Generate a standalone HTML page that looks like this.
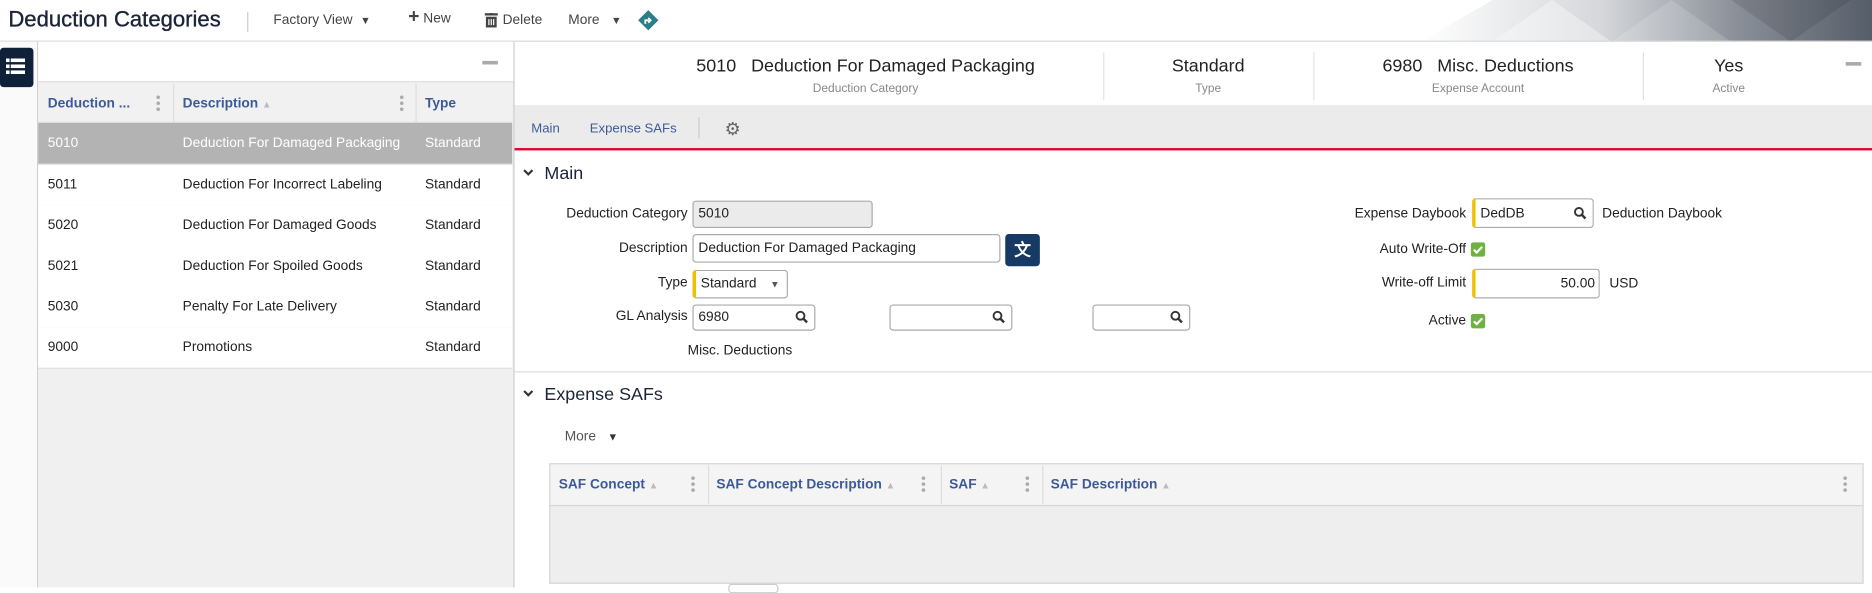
<!DOCTYPE html>
<html><head><meta charset="utf-8"><style>
html,body{margin:0;padding:0;width:1872px;height:587px;overflow:hidden;background:#fff}
#w{position:absolute;left:0;top:0;width:1568px;height:492px;transform:scale(1.19388);transform-origin:0 0;font-family:"Liberation Sans",sans-serif;font-size:11.5px;color:#222}
.a{position:absolute}
.hd{color:#3c5a9a;font-weight:bold;font-size:11.5px}
.inp{position:absolute;border:1px solid #aaa;border-radius:3px;background:#fff;height:22px;box-sizing:border-box;font-size:11.5px;line-height:21px;padding-left:4px}
.req{border-left:3px solid #f0c000}
.lbl{position:absolute;text-align:right;font-size:11.5px}
.mag{position:absolute;right:5px;top:4px}
.chk{position:absolute;width:12px;height:12px;background:#6fb240;border-radius:2px}
.dots{position:absolute;width:3px}
.dots i{display:block;width:3px;height:3px;border-radius:50%;background:#aaa;margin-bottom:2px}
.row{position:absolute;left:32px;width:397px;height:34px;border-bottom:1px solid #ddd;line-height:34px;font-size:11.5px}
.row span{position:absolute}
</style></head><body><div id="w">
<svg class="a" style="left:1190px;top:0" width="378" height="35">
<defs><linearGradient id="g" x1="0" x2="1"><stop offset="0" stop-color="#fff"/><stop offset="0.4" stop-color="#d5d7da"/><stop offset="0.7" stop-color="#8a9099"/><stop offset="1" stop-color="#555d68"/></linearGradient></defs>
<polygon points="0,35 60,0 378,0 378,35" fill="url(#g)"/>
<polygon points="60,35 110,0 160,35" fill="#fff" opacity=".35"/>
<polygon points="160,35 210,0 260,35" fill="#fff" opacity=".15"/>
<polygon points="260,0 310,35 360,0" fill="#000" opacity=".1"/>
</svg>
<div class="a" style="left:0;top:34px;width:1568px;height:1px;background:#d8d8d8"></div>
<div class="a" style="left:7px;top:5px;font-size:18.5px;color:#1b2438;-webkit-text-stroke:0.3px #1b2438">Deduction Categories</div>
<div class="a" style="left:207px;top:10px;width:1px;height:17px;background:#ccc"></div>
<div class="a" style="left:229px;top:11px;font-size:11.5px;color:#444">Factory View &nbsp;<span style="font-size:9px">▼</span></div>
<div class="a" style="left:342px;top:9px;font-size:11.5px;color:#444"><b style="font-size:16px;line-height:12px">+</b> New</div>
<svg class="a" style="left:406px;top:11px" width="11" height="12"><rect x="0" y="0" width="11" height="2" fill="#444"/><rect x="4" y="-1" width="3" height="2" fill="#444"/><rect x="1" y="3" width="9" height="9" fill="#444"/><rect x="3" y="5" width="1" height="5" fill="#fff"/><rect x="5" y="5" width="1" height="5" fill="#fff"/><rect x="7" y="5" width="1" height="5" fill="#fff"/></svg>
<div class="a" style="left:421px;top:11px;font-size:11.5px;color:#444">Delete</div>
<div class="a" style="left:476px;top:11px;font-size:11.5px;color:#444">More &nbsp;&nbsp;<span style="font-size:9px">▼</span></div>
<svg class="a" style="left:534px;top:8px" width="18" height="18"><rect x="3" y="3" width="12" height="12" transform="rotate(45 9 9)" fill="#2a7d89"/><path d="M6.5 12V9h4.5M9 7l2 2-2 2" stroke="#fff" stroke-width="1.5" fill="none"/></svg>
<div class="a" style="left:0;top:35px;width:31px;height:457px;background:#fafafa;border-right:1px solid #d0d0d0"></div>
<div class="a" style="left:0;top:40px;width:28px;height:33px;background:#0f2039;border-radius:3px"></div>
<svg class="a" style="left:5px;top:49px" width="16" height="14"><g fill="#fff"><rect x="0" y="0" width="3" height="3"/><rect x="4" y="0" width="12" height="3"/><rect x="0" y="5" width="3" height="3"/><rect x="4" y="5" width="12" height="3"/><rect x="0" y="10" width="3" height="3"/><rect x="4" y="10" width="12" height="3"/></g></svg>
<div class="a" style="left:32px;top:35px;width:398px;height:457px;background:#f0f0f0;border-right:1px solid #ccc"></div>
<div class="a" style="left:32px;top:35px;width:398px;height:33px;background:#fff"></div>
<div class="a" style="left:404px;top:51px;width:13px;height:3px;background:#aaa"></div>
<div class="a" style="left:32px;top:68px;width:398px;height:1px;background:#ddd"></div>
<div class="a" style="left:32px;top:69px;width:397px;height:33px;background:#f1f1f1;border-bottom:1px solid #ddd"></div>
<div class="a hd" style="left:40px;top:81px">Deduction ...</div>
<div class="dots" style="left:131px;top:80px"><i></i><i></i><i></i></div>
<div class="a" style="left:145px;top:70px;width:1px;height:32px;background:#ddd"></div>
<div class="a hd" style="left:153px;top:81px">Description <span style="color:#bbb;font-size:8px">▲</span></div>
<div class="dots" style="left:335px;top:80px"><i></i><i></i><i></i></div>
<div class="a" style="left:348px;top:70px;width:1px;height:32px;background:#ddd"></div>
<div class="a hd" style="left:356px;top:81px">Type</div>
<div class="row" style="top:103px;background:#b3b3b3;color:#fff"><span style="left:8px">5010</span><span style="left:121px">Deduction For Damaged Packaging</span><span style="left:324px">Standard</span></div>
<div class="row" style="top:138px;background:#fff"><span style="left:8px">5011</span><span style="left:121px">Deduction For Incorrect Labeling</span><span style="left:324px">Standard</span></div>
<div class="row" style="top:172px;background:#fff"><span style="left:8px">5020</span><span style="left:121px">Deduction For Damaged Goods</span><span style="left:324px">Standard</span></div>
<div class="row" style="top:206px;background:#fff"><span style="left:8px">5021</span><span style="left:121px">Deduction For Spoiled Goods</span><span style="left:324px">Standard</span></div>
<div class="row" style="top:240px;background:#fff"><span style="left:8px">5030</span><span style="left:121px">Penalty For Late Delivery</span><span style="left:324px">Standard</span></div>
<div class="row" style="top:274px;background:#fff"><span style="left:8px">9000</span><span style="left:121px">Promotions</span><span style="left:324px">Standard</span></div>
<div class="a" style="left:560px;top:47px;width:330px;text-align:center;font-size:15px">5010&nbsp;&nbsp; Deduction For Damaged Packaging</div>
<div class="a" style="left:560px;top:69px;width:330px;text-align:center;font-size:10px;color:#888">Deduction Category</div>
<div class="a" style="left:924px;top:44px;width:1px;height:40px;background:#e2e2e2"></div>
<div class="a" style="left:924px;top:47px;width:176px;text-align:center;font-size:15px">Standard</div>
<div class="a" style="left:924px;top:69px;width:176px;text-align:center;font-size:10px;color:#888">Type</div>
<div class="a" style="left:1100px;top:44px;width:1px;height:40px;background:#e2e2e2"></div>
<div class="a" style="left:1100px;top:47px;width:276px;text-align:center;font-size:15px">6980&nbsp;&nbsp; Misc. Deductions</div>
<div class="a" style="left:1100px;top:69px;width:276px;text-align:center;font-size:10px;color:#888">Expense Account</div>
<div class="a" style="left:1376px;top:44px;width:1px;height:40px;background:#e2e2e2"></div>
<div class="a" style="left:1376px;top:47px;width:144px;text-align:center;font-size:15px">Yes</div>
<div class="a" style="left:1376px;top:69px;width:144px;text-align:center;font-size:10px;color:#888">Active</div>
<div class="a" style="left:1546px;top:52px;width:13px;height:3px;background:#aaa"></div>
<div class="a" style="left:431px;top:88px;width:1137px;height:36px;background:#ebebeb"></div>
<div class="a" style="left:431px;top:124px;width:1137px;height:2px;background:#e4002b"></div>
<div class="a" style="left:445px;top:102px;color:#3c5a9a;font-size:11px">Main</div>
<div class="a" style="left:494px;top:102px;color:#3c5a9a;font-size:11px">Expense SAFs</div>
<div class="a" style="left:585px;top:98px;width:1px;height:18px;background:#ccc"></div>
<div class="a" style="left:607px;top:99px;color:#666;font-size:15px">⚙</div>
<svg class="a" style="left:438px;top:141px" width="9" height="7"><path d="M1 1.5l3.5 3.5 3.5-3.5" stroke="#333" stroke-width="1.8" fill="none"/></svg>
<div class="a" style="left:456px;top:137px;font-size:15px;color:#1b2438">Main</div>
<div class="lbl" style="left:440px;top:173px;width:136px">Deduction Category</div>
<div class="inp" style="left:580px;top:168px;width:151px;background:#ebebeb;height:23px">5010</div>
<div class="lbl" style="left:440px;top:202px;width:136px">Description</div>
<div class="inp" style="left:580px;top:196px;width:258px;height:24px;line-height:23px">Deduction For Damaged Packaging</div>
<div class="a" style="left:842px;top:196px;width:29px;height:27px;background:#163a63;border-radius:3px;color:#fff;font-size:14px;text-align:center;line-height:27px;font-weight:bold">文</div>
<div class="lbl" style="left:440px;top:231px;width:136px">Type</div>
<div class="inp req" style="left:580px;top:226px;width:80px;height:24px;line-height:23px">Standard <span style="position:absolute;right:6px;font-size:8px;color:#555">▼</span></div>
<div class="lbl" style="left:440px;top:259px;width:136px">GL Analysis</div>
<div class="inp" style="left:580px;top:255px;width:103px">6980<svg class="mag" width="11" height="11"><circle cx="4.5" cy="4.5" r="3.3" stroke="#333" stroke-width="1.6" fill="none"/><path d="M7 7l3 3" stroke="#333" stroke-width="2"/></svg></div>
<div class="inp" style="left:745px;top:255px;width:103px"><svg class="mag" width="11" height="11"><circle cx="4.5" cy="4.5" r="3.3" stroke="#333" stroke-width="1.6" fill="none"/><path d="M7 7l3 3" stroke="#333" stroke-width="2"/></svg></div>
<div class="inp" style="left:915px;top:255px;width:82px"><svg class="mag" width="11" height="11"><circle cx="4.5" cy="4.5" r="3.3" stroke="#333" stroke-width="1.6" fill="none"/><path d="M7 7l3 3" stroke="#333" stroke-width="2"/></svg></div>
<div class="a" style="left:576px;top:288px;font-size:11.5px">Misc. Deductions</div>
<div class="lbl" style="left:1080px;top:173px;width:148px">Expense Daybook</div>
<div class="inp req" style="left:1233px;top:166px;width:102px;height:25px;line-height:24px">DedDB<svg class="mag" style="top:6px" width="11" height="11"><circle cx="4.5" cy="4.5" r="3.3" stroke="#333" stroke-width="1.6" fill="none"/><path d="M7 7l3 3" stroke="#333" stroke-width="2"/></svg></div>
<div class="a" style="left:1342px;top:173px">Deduction Daybook</div>
<div class="lbl" style="left:1080px;top:203px;width:148px">Auto Write-Off</div>
<div class="chk" style="left:1232px;top:203px"><svg width="12" height="12"><path d="M2.5 6.2l2.4 2.3 4.6-4.8" stroke="#fff" stroke-width="1.8" fill="none"/></svg></div>
<div class="lbl" style="left:1080px;top:231px;width:148px">Write-off Limit</div>
<div class="inp req" style="left:1233px;top:225px;width:107px;height:25px;line-height:24px;text-align:right;padding-right:3px">50.00</div>
<div class="a" style="left:1348px;top:232px">USD</div>
<div class="lbl" style="left:1080px;top:263px;width:148px">Active</div>
<div class="chk" style="left:1232px;top:263px"><svg width="12" height="12"><path d="M2.5 6.2l2.4 2.3 4.6-4.8" stroke="#fff" stroke-width="1.8" fill="none"/></svg></div>
<div class="a" style="left:431px;top:311px;width:1137px;height:1px;background:#ddd"></div>
<svg class="a" style="left:438px;top:326px" width="9" height="7"><path d="M1 1.5l3.5 3.5 3.5-3.5" stroke="#333" stroke-width="1.8" fill="none"/></svg>
<div class="a" style="left:456px;top:322px;font-size:15px;color:#1b2438">Expense SAFs</div>
<div class="a" style="left:473px;top:360px;color:#555">More &nbsp;&nbsp;<span style="font-size:9px;color:#333">▼</span></div>
<div class="a" style="left:460px;top:388px;width:1099px;height:99px;border:1px solid #d5d5d5;background:#eeeeee"></div>
<div class="a" style="left:461px;top:389px;width:1099px;height:34px;background:#f4f4f4;border-bottom:1px solid #d5d5d5"></div>
<div class="a hd" style="left:468px;top:400px">SAF Concept <span style="color:#bbb;font-size:8px">▲</span></div>
<div class="dots" style="left:579px;top:399px"><i></i><i></i><i></i></div>
<div class="a" style="left:593px;top:390px;width:1px;height:32px;background:#ddd"></div>
<div class="a hd" style="left:600px;top:400px">SAF Concept Description <span style="color:#bbb;font-size:8px">▲</span></div>
<div class="dots" style="left:772px;top:399px"><i></i><i></i><i></i></div>
<div class="a" style="left:788px;top:390px;width:1px;height:32px;background:#ddd"></div>
<div class="a hd" style="left:795px;top:400px">SAF <span style="color:#bbb;font-size:8px">▲</span></div>
<div class="dots" style="left:859px;top:399px"><i></i><i></i><i></i></div>
<div class="a" style="left:873px;top:390px;width:1px;height:32px;background:#ddd"></div>
<div class="a hd" style="left:880px;top:400px">SAF Description <span style="color:#bbb;font-size:8px">▲</span></div>
<div class="dots" style="left:1544px;top:399px"><i></i><i></i><i></i></div>
<div class="a" style="left:610px;top:489px;width:40px;height:6px;border:1px solid #ccc;border-radius:3px"></div>
</div></body></html>
